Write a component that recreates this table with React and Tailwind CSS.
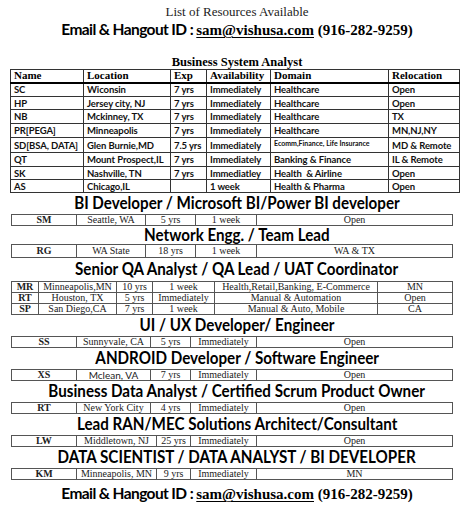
import React from 'react';

const SANS = "font-['Lato','Open_Sans',sans-serif]";
const SERIF = "font-['Liberation_Serif','DejaVu_Serif',serif]";

const bsaCols = ['w-[73px]', 'w-[87px]', 'w-[36px]', 'w-[64px]', 'w-[118px]', 'w-[71px]'];

const bsaRows = [
    { name: 'SC', loc: 'Wiconsin', exp: '7 yrs', avail: 'Immediately', domain: 'Healthcare', reloc: 'Open', h: 'h-[14px]' },
    { name: 'HP', loc: 'Jersey city, NJ', exp: '7 yrs', avail: 'Immediately', domain: 'Healthcare', reloc: 'Open', h: 'h-[13px]' },
    { name: 'NB', loc: 'Mckinney, TX', exp: '7 yrs', avail: 'Immediately', domain: 'Healthcare', reloc: 'TX', h: 'h-[14px]' },
    { name: 'PR[PEGA]', loc: 'Minneapolis', exp: '7 yrs', avail: 'Immediately', domain: 'Healthcare', reloc: 'MN,NJ,NY', h: 'h-[14px]' },
    { name: 'SD[BSA, DATA]', loc: 'Glen Burnie,MD', exp: '7.5 yrs', avail: 'Immediately', domain: 'Ecomm,Finance, Life Insurance', small: true, reloc: 'MD & Remote', h: 'h-[15px]' },
    { name: 'QT', loc: 'Mount Prospect,IL', exp: '7 yrs', avail: 'Immediately', domain: 'Banking & Finance', reloc: 'IL & Remote', h: 'h-[14px]' },
    { name: 'SK', loc: 'Nashville, TN', exp: '7 yrs', avail: 'Immediatley', domain: 'Health  & Airline', reloc: 'Open', h: 'h-[13px]' },
    { name: 'AS', loc: 'Chicago,IL', exp: '', avail: '1 week', domain: 'Health & Pharma', reloc: 'Open', h: 'h-[13px]' },
];

// column class sets for the small tables
const colsA = ['w-[65px]', 'w-[69px]', 'w-[50px]', 'w-[61px]', 'w-[196px]'];
const colsB = ['w-[65px]', 'w-[74px]', 'w-[40px]', 'w-[66px]', 'w-[196px]'];
const colsC = ['w-[65px]', 'w-[80px]', 'w-[34px]', 'w-[66px]', 'w-[196px]'];
const colsQA = ['w-[27px]', 'w-[78px]', 'w-[36px]', 'w-[62px]', 'w-[163px]', 'w-[75px]'];

const sections = [
    {
        title: 'BI Developer / Microsoft BI/Power BI developer',
        head: 'h-[21px]',
        cols: colsA,
        rows: [['SM', 'Seattle, WA', '5 yrs', '1 week', 'Open']],
    },
    {
        title: 'Network Engg. / Team Lead',
        head: 'h-[18px]',
        cols: colsA,
        rows: [['RG', 'WA State', '18 yrs', '1 week', 'WA & TX']],
        rowH: 'h-[13px]',
    },
    {
        title: 'Senior QA Analyst / QA Lead / UAT Coordinator',
        head: 'h-[23px]',
        cols: colsQA,
        rows: [
            ['MR', 'Minneapolis,MN', '10 yrs', '1 week', 'Health,Retail,Banking, E-Commerce', 'MN'],
            ['RT', 'Houston, TX', '5 yrs', 'Immediately', 'Manual & Automation', 'Open'],
            ['SP', 'San Diego,CA', '7 yrs', '1 week', 'Manual & Auto, Mobile', 'CA'],
        ],
    },
    {
        title: 'UI / UX Developer/ Engineer',
        head: 'h-[21px]',
        cols: colsB,
        rows: [['SS', 'Sunnyvale, CA', '5 yrs', 'Immediately', 'Open']],
    },
    {
        title: 'ANDROID Developer / Software Engineer',
        head: 'h-[21px]',
        cols: colsB,
        rows: [['XS', 'Mclean, VA', '7 yrs', 'Immediately', 'Open']],
        sansLoc: true,
    },
    {
        title: 'Business Data Analyst / Certified Scrum Product Owner',
        head: 'h-[21px]',
        cols: colsB,
        rows: [['RT', 'New York City', '4 yrs', 'Immediately', 'Open']],
    },
    {
        title: 'Lead RAN/MEC Solutions Architect/Consultant',
        head: 'h-[21px]',
        cols: colsC,
        rows: [['LW', 'Middletown, NJ', '25 yrs', 'Immediately', 'Open']],
    },
    {
        title: 'DATA SCIENTIST / DATA ANALYST / BI DEVELOPER',
        head: 'h-[21px]',
        cols: colsC,
        rows: [['KM', 'Minneapolis, MN', '9 yrs', 'Immediately', 'MN']],
    },
];

const ContactLine = () => (
    <div className="flex justify-center items-baseline text-black whitespace-pre">
        <span className={`${SANS} text-[15.5px] font-bold tracking-[-0.6px]`}>Email &amp; Hangout ID : </span>
        <span className={`${SERIF} text-[15px] font-bold underline underline-offset-2 decoration-1`}>sam@vishusa.com</span>
        <span className={`${SERIF} text-[15px] font-bold`}> (916-282-9259)</span>
    </div>
);

const Section = ({ section }) => (
    <>
        <div className={`${section.head} flex items-center justify-center`}>
            <h2 className={`${SANS} text-[16.5px] font-bold leading-none text-black whitespace-nowrap scale-x-[0.92]`}>
                {section.title}
            </h2>
        </div>
        <table className="ml-[11px] w-[441px] border-collapse table-fixed">
            <colgroup>
                {section.cols.map((w, i) => (
                    <col key={i} className={w} />
                ))}
            </colgroup>
            <tbody>
                {section.rows.map((row, r) => (
                    <tr key={r} className={section.rowH || 'h-[11px]'}>
                        {row.map((cell, c) => (
                            <td
                                key={c}
                                className={`${section.sansLoc && c === 1 ? SANS : SERIF} border border-[#555] p-0 text-center text-[10px] leading-[10px] text-[#222] whitespace-nowrap ${c === 0 ? 'font-bold' : ''}`}
                            >
                                {cell}
                            </td>
                        ))}
                    </tr>
                ))}
            </tbody>
        </table>
    </>
);

const App = () => {
    return (
        <div className="w-[474px] h-[519px] bg-white overflow-hidden">
            <div className={`${SERIF} pt-[4px] text-center text-[13px] leading-[16px] text-[#222]`}>
                List of Resources Available
            </div>
            <div className="h-[19px] flex items-center justify-center">
                <ContactLine />
            </div>
            <div className={`${SERIF} mt-[17px] text-center text-[12.5px] font-bold leading-[13px] text-black`}>
                Business System Analyst
            </div>

            <table className="ml-[10px] w-[449px] border-collapse table-fixed">
                <colgroup>
                    {bsaCols.map((w, i) => (
                        <col key={i} className={w} />
                    ))}
                </colgroup>
                <thead>
                    <tr className="h-[13px]">
                        {['Name', 'Location', 'Exp', 'Availability', 'Domain', 'Relocation'].map((h) => (
                            <th
                                key={h}
                                className={`${SERIF} border border-[#333] border-b-2 border-b-black px-[3px] py-0 text-left text-[11px] leading-[11px] font-bold text-black`}
                            >
                                {h}
                            </th>
                        ))}
                    </tr>
                </thead>
                <tbody>
                    {bsaRows.map((row) => (
                        <tr key={row.name} className={row.h}>
                            {[row.name, row.loc, row.exp, row.avail, row.domain, row.reloc].map((cell, c) => (
                                <td
                                    key={c}
                                    className={`${SANS} border border-[#333] px-[3px] py-0 text-left font-bold text-[#111] whitespace-pre overflow-hidden ${
                                        row.small && c === 4
                                            ? 'text-[7px] leading-[8px] align-top pt-[1px]'
                                            : 'text-[9.5px] leading-[11px] tracking-[-0.1px]'
                                    }`}
                                >
                                    {cell}
                                </td>
                            ))}
                        </tr>
                    ))}
                </tbody>
            </table>

            {sections.map((s) => (
                <Section key={s.title} section={s} />
            ))}

            <div className="h-[28px] flex items-center justify-center">
                <ContactLine />
            </div>
        </div>
    );
};

export default App;
